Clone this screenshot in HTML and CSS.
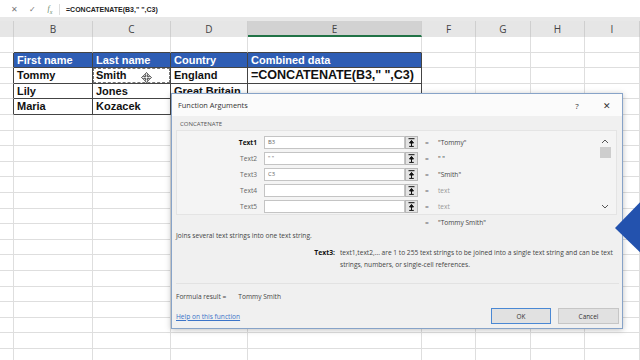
FILE: index.html
```html
<!DOCTYPE html>
<html>
<head>
  <title>CONCATENATE - Function Arguments</title>
  <meta name="viewport" content="width=device-width, initial-scale=1.0" />
  <link rel="stylesheet" href="styles.css">
</head>
<body>
  <div class="formula-bar">
    <span class="fx-btn">&#x2715;</span>
    <span class="fx-btn">&#x2713;</span>
    <span class="fx-btn fx">f<sub>x</sub></span>
    <span class="formula">=CONCATENATE(B3," ",C3)</span>
  </div>

  <div class="sheet" id="sheet">
    <div class="row head">
      <div class="cell"></div>
      <div class="cell">B</div>
      <div class="cell">C</div>
      <div class="cell">D</div>
      <div class="cell sel">E</div>
      <div class="cell">F</div>
      <div class="cell">G</div>
      <div class="cell">H</div>
      <div class="cell">I</div>
    </div>
    <div class="row">
      <div class="cell"></div>
      <div class="cell above"></div>
      <div class="cell above"></div>
      <div class="cell above"></div>
      <div class="cell above"></div>
      <div class="cell"></div><div class="cell"></div><div class="cell"></div><div class="cell"></div>
    </div>
    <div class="row">
      <div class="cell left"></div>
      <div class="cell t th">First name</div>
      <div class="cell t th">Last name</div>
      <div class="cell t th">Country</div>
      <div class="cell t th">Combined data</div>
      <div class="cell"></div><div class="cell"></div><div class="cell"></div><div class="cell"></div>
    </div>
    <div class="row">
      <div class="cell left"></div>
      <div class="cell t">Tommy</div>
      <div class="cell t copied">Smith</div>
      <div class="cell t">England</div>
      <div class="cell t editing">=CONCATENATE(B3," ",C3)</div>
      <div class="cell"></div><div class="cell"></div><div class="cell"></div><div class="cell"></div>
    </div>
    <div class="row">
      <div class="cell left"></div>
      <div class="cell t">Lily</div>
      <div class="cell t">Jones</div>
      <div class="cell t">Great Britain</div>
      <div class="cell t"></div>
      <div class="cell"></div><div class="cell"></div><div class="cell"></div><div class="cell"></div>
    </div>
    <div class="row">
      <div class="cell left"></div>
      <div class="cell t">Maria</div>
      <div class="cell t">Kozacek</div>
      <div class="cell t"></div>
      <div class="cell t"></div>
      <div class="cell"></div><div class="cell"></div><div class="cell"></div><div class="cell"></div>
    </div>
  </div>

  <svg class="move-cursor" width="11" height="11" viewBox="0 0 11 11">
    <path d="M5.5 0.5 L7.5 2.8 L6.3 2.8 L6.3 4.7 L8.2 4.7 L8.2 3.5 L10.5 5.5 L8.2 7.5 L8.2 6.3 L6.3 6.3 L6.3 8.2 L7.5 8.2 L5.5 10.5 L3.5 8.2 L4.7 8.2 L4.7 6.3 L2.8 6.3 L2.8 7.5 L0.5 5.5 L2.8 3.5 L2.8 4.7 L4.7 4.7 L4.7 2.8 L3.5 2.8 Z" fill="#fff" stroke="#222" stroke-width="0.8"/>
  </svg>

  <div class="dialog">
    <div class="title">
      <span>Function Arguments</span>
      <span class="title-btn">?</span>
      <span class="title-btn close">&#x2715;</span>
    </div>
    <div class="body">
      <div class="fname">CONCATENATE</div>
      <div class="args">
        <div class="arg-list" id="args"></div>
        <div class="scroll">
          <svg width="8" height="5" viewBox="0 0 8 5"><path d="M1 4 L4 1 L7 4" fill="none" stroke="#555" stroke-width="1"/></svg>
          <div class="thumb"></div>
          <svg class="down" width="8" height="5" viewBox="0 0 8 5"><path d="M1 1 L4 4 L7 1" fill="none" stroke="#555" stroke-width="1"/></svg>
        </div>
      </div>
      <div class="arg result">
        <span></span><span></span><span></span>
        <span class="eq">=</span>
        <span class="val">"Tommy Smith"</span>
      </div>
      <div class="summary">Joins several text strings into one text string.</div>
      <div class="help-text">
        <b>Text3:</b>
        <span>text1,text2,... are 1 to 255 text strings to be joined into a single text string and can be text strings, numbers, or single-cell references.</span>
      </div>
      <div class="sep"></div>
      <div class="formula-result">Formula result =<span>Tommy Smith</span></div>
      <div class="footer">
        <a href="#" class="help-link">Help on this function</a>
        <button class="btn ok">OK</button>
        <button class="btn">Cancel</button>
      </div>
    </div>
  </div>

  <svg class="pointer" width="30" height="80" viewBox="0 0 30 80">
    <polygon points="0,37 30,6 30,66" fill="#2352ae"/>
  </svg>

  <script>
    // empty sheet rows below the table
    const sheet = document.getElementById('sheet');
    for (let r = 0; r < 16; r++) {
      const row = document.createElement('div');
      row.className = 'row';
      for (let c = 0; c < 9; c++) {
        const cell = document.createElement('div');
        cell.className = 'cell';
        row.appendChild(cell);
      }
      sheet.appendChild(row);
    }

    // function argument rows
    const args = [
      { name: 'Text1', ref: 'B3', val: '"Tommy"', main: true },
      { name: 'Text2', ref: '" "', val: '" "' },
      { name: 'Text3', ref: 'C3', val: '"Smith"' },
      { name: 'Text4', ref: '', val: 'text', hint: true },
      { name: 'Text5', ref: '', val: 'text', hint: true }
    ];
    const list = document.getElementById('args');
    const icon = '<svg width="7" height="9" viewBox="0 0 7 9"><path d="M0.5 0.7 H6.5 M3.5 3 V8 M1.5 5 L3.5 2.4 L5.5 5 Z M1.2 8.4 H5.8" stroke="#111" stroke-width="1" fill="#111"/></svg>';
    args.forEach(a => {
      const row = document.createElement('div');
      row.className = 'arg';
      row.innerHTML = `<span class="label ${a.main ? 'main' : ''}">${a.name}</span>
                       <span class="input">${a.ref}</span>
                       <span class="pick">${icon}</span>
                       <span class="eq">=</span>
                       <span class="val ${a.hint ? 'hint' : ''}">${a.val}</span>`;
      list.appendChild(row);
    });
  </script>
</body>
</html>
```

FILE: styles.css
```css
body { margin: 0; width: 640px; height: 360px; overflow: hidden; background: #fff; font-family: "Liberation Sans", Arial, sans-serif; position: relative; }

.formula-bar { height: 15px; margin-top: 2px; border-bottom: 4px solid #e8e8e8; display: flex; align-items: center; color: #777; font-size: 8px; background: #fff; }
.fx-btn { width: 18px; text-align: center; }
.fx-btn:first-child { margin-left: 5px; }
.fx { font-style: italic; font-family: "Liberation Serif", serif; color: #6a8a6a; border-right: 1px solid #ddd; margin-right: 6px; }
.fx sub { font-size: 6px; }
.formula { color: #222; font-size: 7px; font-weight: bold; }

.row { display: grid; grid-template-columns: 14px 79px 78px 77px 174px 54px 55px 54px 55px; height: 15.6px; }
.cell { border-right: 1px solid #dedede; border-bottom: 1px solid #dedede; box-sizing: border-box; overflow: hidden; white-space: nowrap; padding-left: 3px; line-height: 15px; font-size: 11px; font-weight: bold; color: #111; }
.head { height: 16px; background: #e6e6e6; }
.head .cell { font-family: "Open Sans", sans-serif; font-weight: normal; font-size: 10px; color: #444; text-align: center; padding: 0; border-color: #cfcfcf; border-bottom: none; line-height: 16px; }
.head .sel { background: #d2d2d2; border-bottom: 2px solid #217346; }
.above { border-bottom-color: #444; }
.left { border-right-color: #444; }
.t { border-right-color: #444; border-bottom-color: #444; }
.th { background: #2e5db4; color: #fff; }
.editing { font-size: 12.6px; letter-spacing: -0.1px; overflow: visible; }
.copied { position: relative; }
.copied::after { content: ""; position: absolute; left: 0; top: 0; right: 0; bottom: 0; border: 1px dashed #777; }

.move-cursor { position: absolute; left: 141px; top: 72px; }

.dialog { position: absolute; left: 171px; top: 93px; width: 452px; height: 236px; box-sizing: border-box; background: #f0f0f0; border: 1px solid #87a3c8; box-shadow: 0 1px 6px rgba(0,0,0,0.25); font-family: "Open Sans", sans-serif; font-size: 6.6px; color: #444; display: flex; flex-direction: column; }
.title { height: 22px; flex: none; background: #fbfbfb; display: flex; align-items: center; padding-left: 6px; font-size: 7.4px; color: #333; }
.title-btn { width: 30px; text-align: center; font-size: 8px; color: #333; }
.title-btn:nth-child(2) { margin-left: auto; }
.close { font-size: 9px; }

.body { flex: 1; display: flex; flex-direction: column; padding: 0 3px 0 4px; }
.fname { height: 10px; line-height: 10px; margin: 3px 0 1px 4px; font-size: 6px; color: #555; }
.args { height: 85px; box-sizing: border-box; padding: 3px 0 2px; background: #f4f4f4; border: 1px solid #e4e4e4; display: flex; margin-right: 2px; }
.arg-list { flex: 1; }
.arg { display: grid; grid-template-columns: 80px 148px 13px 18px 1fr; height: 16px; align-items: center; }
.label { text-align: right; color: #666; }
.label.main { color: #111; font-weight: bold; }
.input { height: 13px; box-sizing: border-box; margin-left: 7px; background: #fff; border: 1px solid #c4c4c4; line-height: 11px; padding-left: 3px; color: #666; font-size: 5.8px; }
.pick { height: 13px; box-sizing: border-box; background: #e4e4e4; border: 1px solid #b8b8b8; display: flex; align-items: center; justify-content: center; }
.eq { text-align: center; color: #666; }
.val { color: #444; padding-left: 2px; }
.val.hint { color: #999; }
.scroll { width: 12px; margin-right: 5px; display: flex; flex-direction: column; align-items: center; padding-top: 5px; }
.thumb { width: 11px; height: 11px; background: #cdcdcd; margin-top: 3px; }
.down { margin-top: auto; margin-bottom: 3px; }
.result { height: 14px; padding-left: 1px; }

.summary { margin: 2px 0 0 0; line-height: 10px; }
.help-text { display: grid; grid-template-columns: 159px 1fr; column-gap: 5px; margin-top: 6px; line-height: 12px; padding-right: 2px; }
.help-text b { text-align: right; color: #111; font-size: 6.8px; }
.sep { height: 1px; background: #e2e2e2; margin: 12px 0 0; }
.formula-result { margin-top: 7px; line-height: 12px; color: #444; }
.formula-result span { margin-left: 12px; }
.footer { display: flex; align-items: center; margin-top: auto; margin-bottom: 4px; }
.help-link { color: #3c74c8; margin-right: auto; }
.btn { font-family: "Open Sans", sans-serif; font-size: 6.4px; color: #333; height: 16px; width: 61px; background: #e1e1e1; border: 1px solid #c6c6c6; padding: 0; }
.btn.ok { border: 1px solid #4a88d4; margin-right: 7px; width: 60px; }

.pointer { position: absolute; left: 615px; top: 191px; }
```
